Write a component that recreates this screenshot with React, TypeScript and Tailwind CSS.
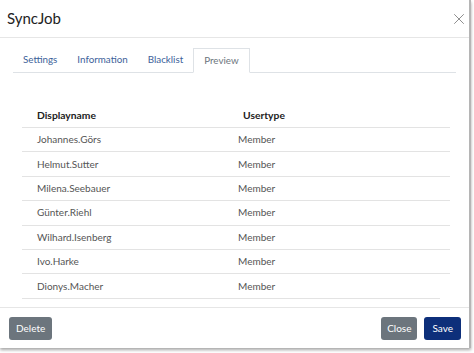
import { X } from 'lucide-react';

const rows = [
  'Johannes.Görs',
  'Helmut.Sutter',
  'Milena.Seebauer',
  'Günter.Riehl',
  'Wilhard.Isenberg',
  'Ivo.Harke',
  'Dionys.Macher',
];

const tabs = ['Settings', 'Information', 'Blacklist', 'Preview'];

export default function App() {
  return (
    <div className="w-[474px] h-[353px] bg-white" style={{ fontFamily: 'Lato, "Open Sans", sans-serif' }}>
      <div className="flex flex-col w-[471px] h-[348px] bg-white border-r-2 border-[#b5b5b5] shadow-[0_2px_3px_rgba(0,0,0,0.35)]">
        {/* Header */}
        <div className="flex items-center justify-between h-[38px] pl-[7px] pr-[1px] border-b border-[#e6e6e6]">
          <h1 className="text-[15px] text-[#222]">SyncJob</h1>
          <X size={18} strokeWidth={1.1} className="text-[#777]" />
        </div>

        {/* Body */}
        <div className="flex-1 pl-[13px] pr-[13px] pt-[10px]">
          <div className="flex items-end h-[25px] border-b border-[#dee2e6]">
            {tabs.map((t) => (
              <div
                key={t}
                className={
                  t === 'Preview'
                    ? 'h-[25px] px-[10px] flex items-center text-[9.8px] text-[#6c757d] border border-[#dee2e6] border-b-white -mb-px bg-white'
                    : 'h-[25px] px-[10px] flex items-center text-[9.8px] text-[#3d5f9a]'
                }
              >
                {t}
              </div>
            ))}
          </div>

          <div className="mt-[32px] pl-[9px] pr-[6px]">
            <div className="flex items-center h-[23px] border-b border-[#e3e3e3] text-[10.3px] font-bold text-[#222]">
              <div className="w-[221px] pl-[15px]">Displayname</div>
              <div>Usertype</div>
            </div>
            {rows.map((r, i) => (
              <div
                key={r}
                className={
                  i === rows.length - 1
                    ? 'flex items-center h-[24.4px] border-b border-[#e3e3e3] text-[10px] text-[#555] mr-[10px]'
                    : 'flex items-center h-[24.4px] border-b border-[#e3e3e3] text-[10px] text-[#555]'
                }
              >
                <div className="w-[216px] pl-[15px]">{r}</div>
                <div>Member</div>
              </div>
            ))}
          </div>
        </div>

        {/* Footer */}
        <div className="flex items-center justify-between h-[41px] px-[9px] border-t border-[#e6e6e6]">
          <button className="h-[23px] px-[7px] rounded-[3px] bg-[#6c757d] text-white text-[10px]">Delete</button>
          <div className="flex gap-[7px] mr-[-1px]">
            <button className="h-[23px] px-[6px] rounded-[3px] bg-[#6c757d] text-white text-[10px]">Close</button>
            <button className="h-[23px] px-[8px] rounded-[3px] bg-[#0d2f7a] text-white text-[10px]">Save</button>
          </div>
        </div>
      </div>
    </div>
  );
}
